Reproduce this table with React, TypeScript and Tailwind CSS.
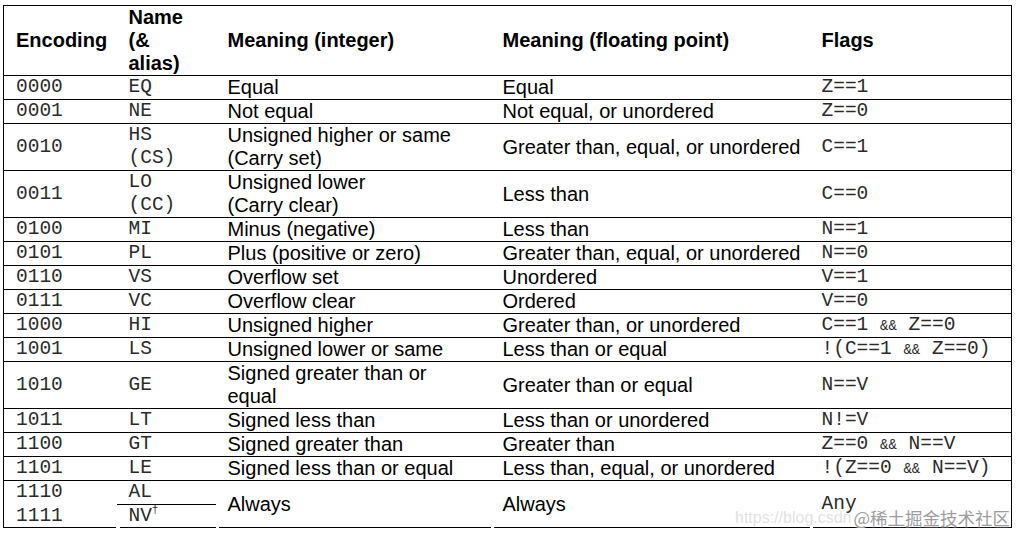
import React from "react";

type Row = {
  enc: string;
  name: React.ReactNode;
  int: React.ReactNode;
  fp: React.ReactNode;
  flags: React.ReactNode;
};

const And = () => <span className="text-[14px] leading-none">&amp;&amp;</span>;

const rows: Row[] = [
  { enc: "0000", name: "EQ", int: "Equal", fp: "Equal", flags: "Z==1" },
  { enc: "0001", name: "NE", int: "Not equal", fp: "Not equal, or unordered", flags: "Z==0" },
  {
    enc: "0010",
    name: (<>HS<br />(CS)</>),
    int: (<>Unsigned higher or same<br />(Carry set)</>),
    fp: "Greater than, equal, or unordered",
    flags: "C==1",
  },
  {
    enc: "0011",
    name: (<>LO<br />(CC)</>),
    int: (<>Unsigned lower<br />(Carry clear)</>),
    fp: "Less than",
    flags: "C==0",
  },
  { enc: "0100", name: "MI", int: "Minus (negative)", fp: "Less than", flags: "N==1" },
  { enc: "0101", name: "PL", int: "Plus (positive or zero)", fp: "Greater than, equal, or unordered", flags: "N==0" },
  { enc: "0110", name: "VS", int: "Overflow set", fp: "Unordered", flags: "V==1" },
  { enc: "0111", name: "VC", int: "Overflow clear", fp: "Ordered", flags: "V==0" },
  {
    enc: "1000",
    name: "HI",
    int: "Unsigned higher",
    fp: "Greater than, or unordered",
    flags: (<>C==1 <And /> Z==0</>),
  },
  {
    enc: "1001",
    name: "LS",
    int: "Unsigned lower or same",
    fp: "Less than or equal",
    flags: (<>!(C==1 <And /> Z==0)</>),
  },
  {
    enc: "1010",
    name: "GE",
    int: (<>Signed greater than or<br />equal</>),
    fp: "Greater than or equal",
    flags: "N==V",
  },
  { enc: "1011", name: "LT", int: "Signed less than", fp: "Less than or unordered", flags: "N!=V" },
  {
    enc: "1100",
    name: "GT",
    int: "Signed greater than",
    fp: "Greater than",
    flags: (<>Z==0 <And /> N==V</>),
  },
  {
    enc: "1101",
    name: "LE",
    int: "Signed less than or equal",
    fp: "Less than, equal, or unordered",
    flags: (<>!(Z==0 <And /> N==V)</>),
  },
];

const mono = "font-['Liberation_Mono',monospace] text-[19.5px] text-[#2a2a2a]";
const cell = "p-0 pl-3 h-[23px] align-middle leading-[23px] whitespace-nowrap";
// bottom rule that stops short of the left edge, like the source table
const gapRule =
  "bg-[linear-gradient(#000,#000)] bg-no-repeat bg-[length:calc(100%-3px)_1px] bg-[position:right_bottom]";

export default function App() {
  return (
    <div className="relative w-[1016px] h-[533px] bg-white overflow-hidden font-['Liberation_Sans',Arial,sans-serif] text-[20px] text-black">
      <div className="pt-[5px] pl-[3px]">
        <table className="table-fixed border-collapse w-[1008px] border-x border-t border-black">
          <colgroup>
            <col className="w-[113px]" />
            <col className="w-[99px]" />
            <col className="w-[275px]" />
            <col className="w-[319px]" />
            <col className="w-[202px]" />
          </colgroup>
          <thead>
            <tr className="border-b border-black">
              <th className={`${cell} font-bold text-left`}>Encoding</th>
              <th className={`${cell} font-bold text-left`}>
                Name
                <br />
                (&amp;
                <br />
                alias)
              </th>
              <th className={`${cell} font-bold text-left`}>Meaning (integer)</th>
              <th className={`${cell} font-bold text-left`}>Meaning (floating point)</th>
              <th className={`${cell} font-bold text-left`}>Flags</th>
            </tr>
          </thead>
          <tbody>
            {rows.map((r) => (
              <tr key={r.enc} className="border-b border-black">
                <td className={`${cell} ${mono}`}>{r.enc}</td>
                <td className={`${cell} ${mono}`}>{r.name}</td>
                <td className={cell}>{r.int}</td>
                <td className={cell}>{r.fp}</td>
                <td className={`${cell} ${mono}`}>{r.flags}</td>
              </tr>
            ))}
            <tr>
              <td className={`${cell} ${mono}`}>1110</td>
              <td className={`${cell} ${mono} border-b border-black`}>AL</td>
              <td rowSpan={2} className={`${cell} ${gapRule}`}>Always</td>
              <td rowSpan={2} className={`${cell} ${gapRule}`}>Always</td>
              <td rowSpan={2} className={`${cell} ${mono} ${gapRule}`}>Any</td>
            </tr>
            <tr>
              <td className={`${cell} ${mono} bg-[linear-gradient(#000,#000)] bg-no-repeat bg-[length:calc(100%-1px)_1px] bg-[position:left_bottom]`}>
                1111
              </td>
              <td className={`${cell} ${mono} ${gapRule}`}>
                NV
                <span className="relative -top-[8px] text-[11px] leading-none font-['Liberation_Sans',sans-serif]">†</span>
              </td>
            </tr>
          </tbody>
        </table>
      </div>

      {/* watermark */}
      <div className="absolute left-[735px] top-[505px] flex items-center whitespace-nowrap">
        <span className="text-[16px] text-[#e2e2e2] font-['Liberation_Sans',sans-serif]">https://blog.csdn</span>
        <span className="ml-[2px] text-[17.5px] text-[#9c9c9c] font-['Noto_Sans_CJK_SC',sans-serif] [text-shadow:0_0_2px_#fff,0_0_2px_#fff]">
          @稀土掘金技术社区
        </span>
      </div>
    </div>
  );
}
